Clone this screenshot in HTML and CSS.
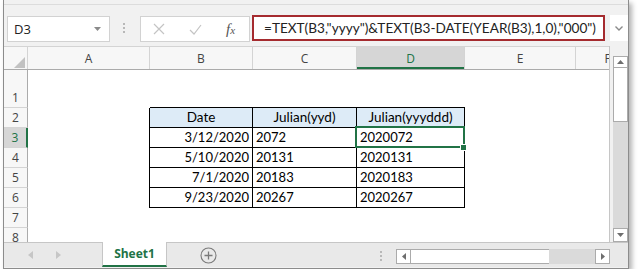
FILE: index.html
```html
<!DOCTYPE html>
<html lang="en">
<head>
  <meta charset="UTF-8">
  <title>Julian Date - Sheet1</title>
  <link rel="stylesheet" href="styles.css">
</head>
<body>

  <div class="window">
    <div class="formula-bar">
      <div class="name-box">
        <span>D3</span>
        <svg class="caret" width="7" height="4" viewBox="0 0 7 4"><polygon points="0,0 7,0 3.5,4" fill="#8a8a8a"/></svg>
      </div>
      <div class="grip"><i></i><i></i><i></i></div>
      <div class="fx-box">
        <svg class="cancel" width="12" height="12" viewBox="0 0 12 12"><path d="M1 1 L11 11 M11 1 L1 11" stroke="#c4c4c4" stroke-width="1.2"/></svg>
        <svg class="enter" width="13" height="11" viewBox="0 0 13 11"><path d="M1 6 L5 10 L12 1" fill="none" stroke="#c4c4c4" stroke-width="1.2"/></svg>
        <span class="fx">f<span>x</span></span>
      </div>
      <div class="formula">=TEXT(B3,"yyyy")&amp;TEXT(B3-DATE(YEAR(B3),1,0),"000")</div>
      <div class="expand">
        <svg width="8" height="5" viewBox="0 0 8 5"><path d="M0.5 0.5 L4 4 L7.5 0.5" fill="none" stroke="#8a8a8a" stroke-width="1.4"/></svg>
      </div>
    </div>

    <div class="main">
      <div class="sheet">
        <div class="row col-head">
          <div class="corner"><svg width="11" height="11" viewBox="0 0 11 11"><polygon points="0,11 11,0 11,11" fill="#c2c2c2"/></svg></div>
          <div class="ch">A</div>
          <div class="ch">B</div>
          <div class="ch">C</div>
          <div class="ch active">D</div>
          <div class="ch">E</div>
          <div class="ch">F</div>
        </div>
        <div class="row r1">
          <div class="rh">1</div>
          <div class="c"></div>
          <div class="c tt"></div>
          <div class="c tt"></div>
          <div class="c tt"></div>
          <div class="c"></div>
          <div class="c"></div>
        </div>
        <div class="row">
          <div class="rh">2</div>
          <div class="c tl"></div>
          <div class="c th">Date</div>
          <div class="c th">Julian(yyd)</div>
          <div class="c th">Julian(yyyddd)</div>
          <div class="c"></div>
          <div class="c"></div>
        </div>
        <div class="row">
          <div class="rh active">3</div>
          <div class="c tl"></div>
          <div class="c td num">3/12/2020</div>
          <div class="c td">2072</div>
          <div class="c td sel">2020072</div>
          <div class="c"></div>
          <div class="c"></div>
        </div>
        <div class="row">
          <div class="rh">4</div>
          <div class="c tl"></div>
          <div class="c td num">5/10/2020</div>
          <div class="c td">20131</div>
          <div class="c td">2020131</div>
          <div class="c"></div>
          <div class="c"></div>
        </div>
        <div class="row">
          <div class="rh">5</div>
          <div class="c tl"></div>
          <div class="c td num">7/1/2020</div>
          <div class="c td">20183</div>
          <div class="c td">2020183</div>
          <div class="c"></div>
          <div class="c"></div>
        </div>
        <div class="row">
          <div class="rh">6</div>
          <div class="c tl"></div>
          <div class="c td num">9/23/2020</div>
          <div class="c td">20267</div>
          <div class="c td">2020267</div>
          <div class="c"></div>
          <div class="c"></div>
        </div>
        <div class="row">
          <div class="rh">7</div>
          <div class="c"></div>
          <div class="c"></div>
          <div class="c"></div>
          <div class="c"></div>
          <div class="c"></div>
          <div class="c"></div>
        </div>
        <div class="row">
          <div class="rh">8</div>
          <div class="c"></div>
          <div class="c"></div>
          <div class="c"></div>
          <div class="c"></div>
          <div class="c"></div>
          <div class="c"></div>
        </div>
      </div>

      <div class="vscroll">
        <div class="sb-btn vs-up"><svg width="7" height="4" viewBox="0 0 7 4"><polygon points="0,4 7,4 3.5,0" fill="#6e6e6e"/></svg></div>
        <div class="vs-thumb"></div>
        <div class="vs-track"></div>
        <div class="sb-btn vs-down"><svg width="7" height="4" viewBox="0 0 7 4"><polygon points="0,0 7,0 3.5,4" fill="#6e6e6e"/></svg></div>
      </div>
    </div>

    <div class="tab-bar">
      <div class="nav">
        <svg width="5" height="8" viewBox="0 0 5 8"><polygon points="5,0 5,8 0,4" fill="#c6c6c6"/></svg>
        <svg width="5" height="8" viewBox="0 0 5 8"><polygon points="0,0 0,8 5,4" fill="#c6c6c6"/></svg>
      </div>
      <div class="tab">Sheet1</div>
      <div class="add">
        <svg width="17" height="17" viewBox="0 0 17 17">
          <circle cx="8.5" cy="8.5" r="7.5" fill="none" stroke="#7a7a7a" stroke-width="1.1"/>
          <path d="M8.5 4.5 V12.5 M4.5 8.5 H12.5" stroke="#7a7a7a" stroke-width="1.3"/>
        </svg>
      </div>
      <div class="grip bar-grip"><i></i><i></i><i></i></div>
      <div class="hscroll">
        <div class="sb-btn hs-btn"><svg width="4" height="7" viewBox="0 0 4 7"><polygon points="4,0 4,7 0,3.5" fill="#6e6e6e"/></svg></div>
        <div class="hs-thumb"></div>
        <div class="hs-track"></div>
        <div class="sb-btn hs-btn"><svg width="4" height="7" viewBox="0 0 4 7"><polygon points="0,0 0,7 4,3.5" fill="#6e6e6e"/></svg></div>
      </div>
    </div>
  </div>

</body>
</html>
```

FILE: styles.css
```css
body {
  margin: 0;
  background: #fff;
  font-family: "Open Sans", "Noto Sans", sans-serif;
  color: #444;
}

.window {
  margin-left: 3px;
  width: 626px;
  height: 269px;
  box-sizing: border-box;
  background: #f1f1f1;
  border: 1px solid #8c8c8c;
  border-top: none;
  box-shadow: 3px 3px 5px rgba(0, 0, 0, 0.3);
  display: flex;
  flex-direction: column;
  overflow: hidden;
}

/* formula bar */

.formula-bar {
  margin-top: 4px;
  border-top: 1px solid #dcdcdc;
  height: 42px;
  box-sizing: border-box;
  padding: 11px 0 0 3px;
  display: flex;
  align-items: flex-start;
}

.name-box {
  width: 103px;
  height: 26px;
  box-sizing: border-box;
  background: #fff;
  border: 1px solid #d2d2d2;
  display: flex;
  align-items: center;
  justify-content: space-between;
  padding: 0 8px 0 6px;
  font-size: 13px;
  color: #222;
}

.grip {
  display: flex;
  flex-direction: column;
  gap: 2px;
  margin: 7px 0 0 13px;
  width: 3px;
}

.grip i {
  width: 2px;
  height: 2px;
  background: #b8b8b8;
}

.fx-box {
  margin-left: 14px;
  width: 110px;
  height: 26px;
  box-sizing: border-box;
  background: #fff;
  border: 1px solid #d2d2d2;
  display: flex;
  align-items: center;
  padding-left: 12px;
}

.enter {
  margin-left: 24px;
}

.fx {
  margin-left: 24px;
  font-family: "Liberation Serif", serif;
  font-style: italic;
  font-size: 15px;
  color: #555;
}

.fx span {
  font-size: 11px;
}

.formula {
  margin: -1px 0 0 2px;
  width: 353px;
  height: 26px;
  box-sizing: border-box;
  background: #fff;
  border: 2px solid #a52b2f;
  padding-left: 10px;
  font-family: "Lato", sans-serif;
  font-size: 13.6px;
  line-height: 22px;
  color: #222;
  white-space: nowrap;
  overflow: hidden;
}

.expand {
  margin: -1px 0 0 5px;
  width: 18px;
  height: 26px;
  box-sizing: border-box;
  background: #fff;
  display: flex;
  align-items: center;
  justify-content: center;
}

/* grid */

.main {
  height: 196px;
  display: flex;
}

.sheet {
  width: 606px;
  flex-shrink: 0;
  box-sizing: border-box;
  border-right: 1px solid #c6c6c6;
  background: #fff;
  overflow: hidden;
}

.row {
  display: grid;
  grid-template-columns: 24px 122px 103px 104px 108px 111px 64px;
  height: 20px;
}

.r1 {
  height: 38px;
}

.col-head {
  height: 24px;
  border-top: 1px solid #d4d4d4;
  border-bottom: 1px solid #ababab;
  box-sizing: border-box;
  background: #f7f7f7;
}

.corner {
  border-right: 1px solid #d4d4d4;
  display: flex;
  align-items: flex-end;
  justify-content: flex-end;
  padding: 0 2px 1px 0;
}

.ch {
  border-right: 1px solid #d4d4d4;
  display: flex;
  align-items: center;
  justify-content: center;
  font-size: 12px;
}

.ch.active {
  background: #d6d6d6;
  color: #217346;
  box-shadow: inset 0 -2px 0 #217346;
}

.rh {
  background: #f7f7f7;
  border-right: 1px solid #ababab;
  border-bottom: 1px solid #d4d4d4;
  display: flex;
  align-items: flex-end;
  justify-content: center;
  padding-bottom: 1px;
  font-size: 12px;
  line-height: 17px;
}

.rh.active {
  background: #d6d6d6;
  color: #217346;
  border-right: 2px solid #217346;
}

.c {
  display: flex;
  align-items: flex-end;
  padding: 0 3px 1px;
  font-family: "Lato", sans-serif;
  font-size: 13px;
  line-height: 17px;
  color: #000;
  white-space: nowrap;
}

.tt {
  border-bottom: 1px solid #000;
}

.tl {
  border-right: 1px solid #000;
}

.th,
.td {
  border-right: 1px solid #000;
  border-bottom: 1px solid #000;
}

.th {
  background: #ddebf7;
  justify-content: center;
  font-size: 13.5px;
}

.num {
  justify-content: flex-end;
}

.sel {
  position: relative;
}

.sel::before {
  content: "";
  position: absolute;
  left: -2px;
  right: -1px;
  top: -2px;
  bottom: -1px;
  border: 2px solid #217346;
}

.sel::after {
  content: "";
  position: absolute;
  right: -3px;
  bottom: -4px;
  width: 5px;
  height: 5px;
  background: #217346;
  border: 1px solid #fff;
}

/* scroll bars */

.vscroll {
  width: 18px;
  box-sizing: border-box;
  padding: 10px 0 0 3px;
  display: flex;
  flex-direction: column;
}

.sb-btn {
  background: #fff;
  border: 1px solid #ababab;
  box-sizing: border-box;
  display: flex;
  align-items: center;
  justify-content: center;
}

.vs-up {
  height: 12px;
}

.vs-down {
  height: 14px;
}

.vs-thumb {
  height: 54px;
  background: #fff;
  border: 1px solid #ababab;
  border-top: none;
  box-sizing: border-box;
}

.vs-track {
  flex: 1;
  background: #dadada;
}

/* sheet tabs */

.tab-bar {
  height: 25px;
  box-sizing: border-box;
  border-top: 1px solid #c6c6c6;
  background: #e9e9e9;
  display: flex;
}

.nav {
  width: 98px;
  display: flex;
  align-items: center;
  gap: 23px;
  padding-left: 24px;
  box-sizing: border-box;
}

.tab {
  margin-top: -1px;
  width: 65px;
  height: 25px;
  box-sizing: border-box;
  background: #fff;
  border-left: 1px solid #c6c6c6;
  border-right: 1px solid #c6c6c6;
  border-bottom: 2px solid #217346;
  display: flex;
  align-items: center;
  justify-content: center;
  font-size: 12px;
  font-weight: bold;
  color: #217346;
}

.add {
  margin-left: 33px;
  display: flex;
  align-items: center;
}

.bar-grip {
  margin: 8px 0 0 163px;
}

.hscroll {
  margin: 6px 0 0 13px;
  width: 214px;
  height: 15px;
  display: flex;
}

.hs-btn {
  width: 15px;
}

.hs-thumb {
  width: 138px;
  background: #fff;
  border-top: 1px solid #ababab;
  border-bottom: 1px solid #ababab;
  box-sizing: border-box;
}

.hs-track {
  flex: 1;
  background: #dadada;
}
```
